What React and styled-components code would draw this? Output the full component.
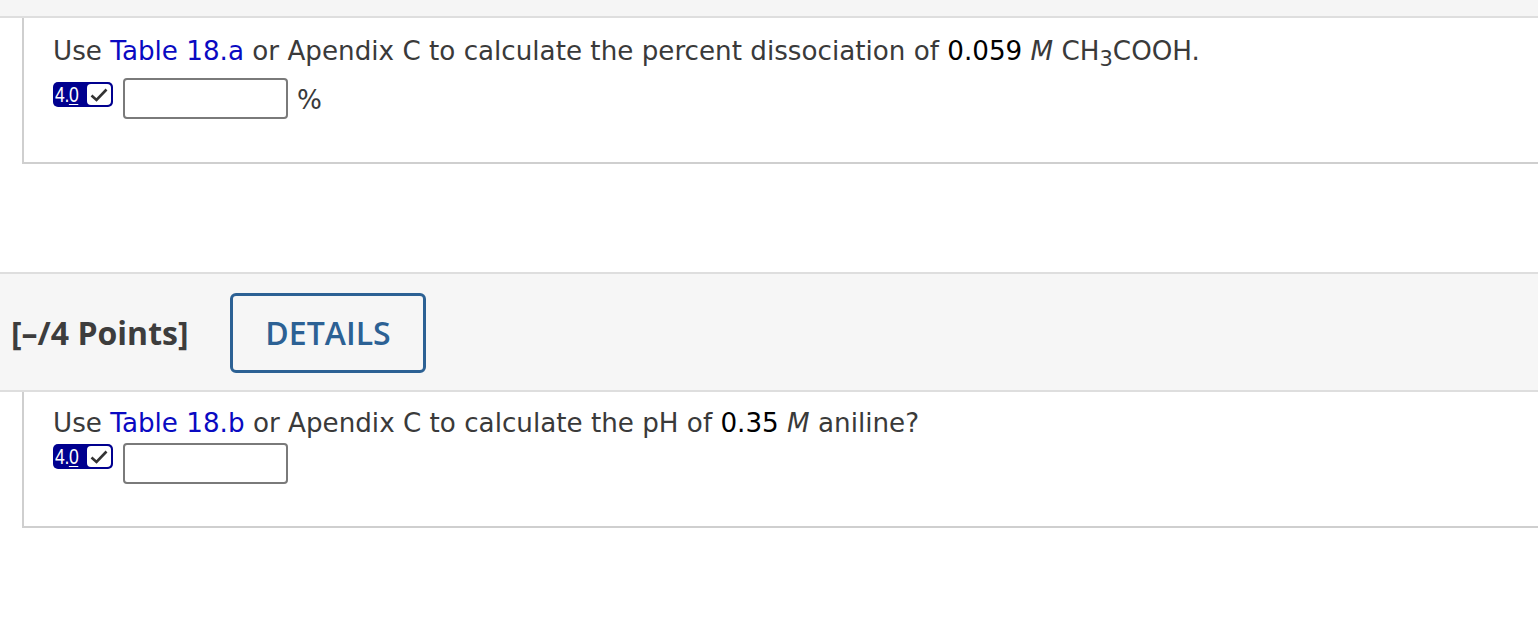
import React from 'react'
import styled, { createGlobalStyle } from 'styled-components'

const GlobalStyle = createGlobalStyle`
  body {
    margin: 0;
    background: #fff;
    font-family: "DejaVu Sans", Verdana, sans-serif;
  }
`

const App = () => {
  return (
    <Page>
      <GlobalStyle />
      <TopStrip />
      <QuestionPanel $height={144}>
        <Prompt $top={18}>
          Use <Link>Table 18.a</Link> or Apendix C to calculate the percent dissociation of{' '}
          <Num>0.059</Num> <Em>M</Em> CH<Sub>3</Sub>COOH.
        </Prompt>
        <AnswerRow $top={12}>
          <Badge $offset={4} />
          <AnswerInput />
          <Unit>%</Unit>
        </AnswerRow>
      </QuestionPanel>
      <Gap />
      <HeaderBar>
        <Points>[–/4 Points]</Points>
        <DetailsButton>DETAILS</DetailsButton>
      </HeaderBar>
      <QuestionPanel $height={134}>
        <Prompt $top={16}>
          Use <Link>Table 18.b</Link> or Apendix C to calculate the pH of <Num>0.35</Num>{' '}
          <Em>M</Em> aniline?
        </Prompt>
        <AnswerRow $top={5}>
          <Badge $offset={1} />
          <AnswerInput />
        </AnswerRow>
      </QuestionPanel>
    </Page>
  )
}

const Badge = ({ $offset }) => (
  <BadgeBox $offset={$offset}>
    <BadgeText>
      4.<u>0</u>
    </BadgeText>
    <CheckBox>
      <svg width="20" height="16" viewBox="0 0 20 16">
        <path d="M2.5 8.5 L7.5 13 L17.5 2.5" fill="none" stroke="#333" strokeWidth="2.6" />
      </svg>
    </CheckBox>
  </BadgeBox>
)

export default App

const Page = styled.div`
  width: 1538px;
  min-height: 624px;
`

const TopStrip = styled.div`
  height: 16px;
  background: #f5f5f5;
  border-bottom: 2px solid #dedede;
`

const QuestionPanel = styled.div`
  margin-left: 22px;
  border-left: 2px solid #cfcfcf;
  border-bottom: 2px solid #cfcfcf;
  height: ${p => p.$height}px;
  padding-left: 29px;
  color: #3a3a3a;
`

const Prompt = styled.div`
  font-size: 26.2px;
  line-height: 30px;
  padding-top: ${p => p.$top}px;
  color: #3a3a3a;
  white-space: nowrap;
`

const Link = styled.span`
  color: #0a0ac2;
`

const Num = styled.span`
  color: #000;
`

const Em = styled.i`
  color: #3a3a3a;
`

const Sub = styled.sub`
  font-size: 0.8em;
  line-height: 0;
  vertical-align: -0.3em;
`

const AnswerRow = styled.div`
  display: flex;
  align-items: flex-start;
  margin-top: ${p => p.$top}px;
`

const BadgeBox = styled.span`
  display: flex;
  align-items: center;
  width: 60px;
  height: 25px;
  box-sizing: border-box;
  background: #00008f;
  border-radius: 5px;
  padding: 2px 2px 2px 2px;
  margin-top: ${p => p.$offset}px;
  margin-right: 10px;
`

const BadgeText = styled.span`
  color: #fff;
  font-family: "Liberation Sans", Arial, sans-serif;
  font-size: 22px;
  line-height: 21px;
  width: 32px;
  letter-spacing: -0.5px;
  transform: scaleX(0.8);
  transform-origin: left center;

  u {
    text-decoration-thickness: 1px;
    text-underline-offset: 2px;
  }
`

const CheckBox = styled.span`
  display: flex;
  align-items: center;
  justify-content: center;
  width: 24px;
  height: 21px;
  background: #fff;
  border-radius: 4px;
`

const AnswerInput = styled.div`
  width: 165px;
  height: 41px;
  box-sizing: border-box;
  border: 2px solid #7a7a7a;
  border-radius: 4px;
  background: #fff;
`

const Unit = styled.span`
  font-size: 26.2px;
  line-height: 30px;
  color: #3a3a3a;
  margin: 7px 0 0 9px;
`

const Gap = styled.div`
  height: 108px;
`

const HeaderBar = styled.div`
  display: flex;
  align-items: center;
  height: 116px;
  background: #f6f6f6;
  border-top: 2px solid #dedede;
  border-bottom: 2px solid #dedede;
  padding-left: 11px;
`

const Points = styled.span`
  font-family: "Open Sans", sans-serif;
  font-weight: 700;
  font-size: 32px;
  color: #3d3d3d;
  width: 219px;
`

const DetailsButton = styled.button`
  width: 196px;
  height: 80px;
  border: 3px solid #2c6194;
  border-radius: 6px;
  background: transparent;
  font-family: "Open Sans", sans-serif;
  font-weight: 600;
  font-size: 32px;
  color: #2c6194;
  margin-top: 1px;
`
